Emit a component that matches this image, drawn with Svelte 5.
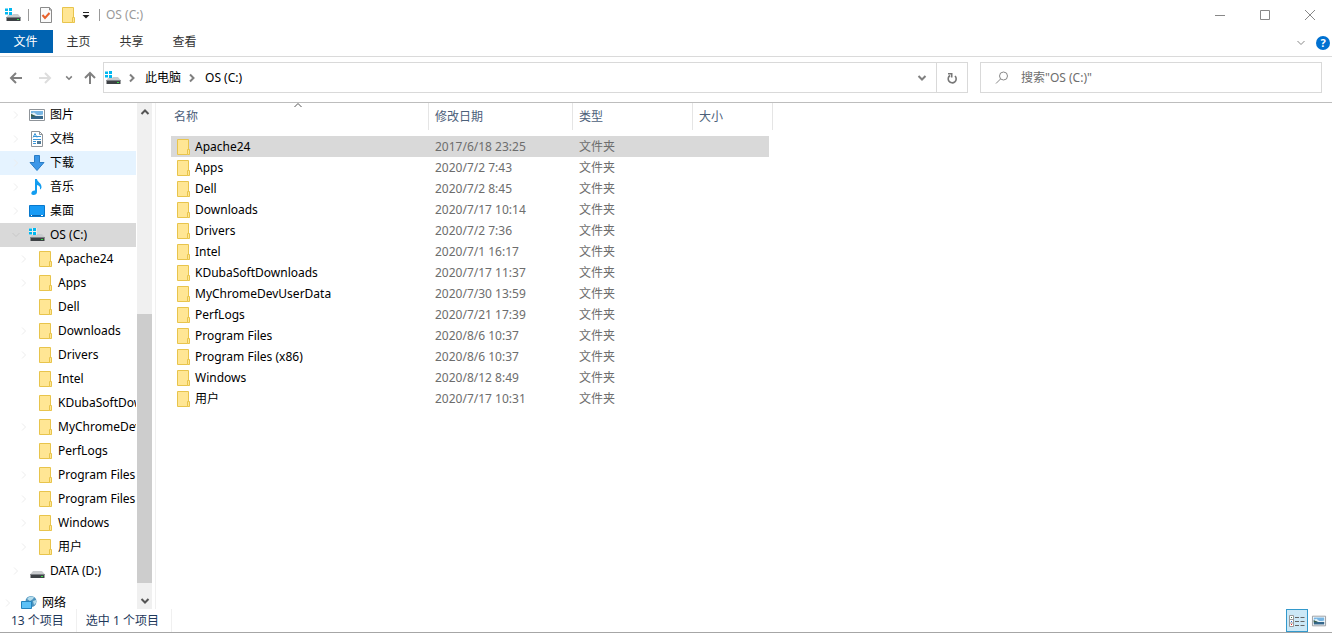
<script lang="ts">
  type Node = { name: string; icon: string; level: number; arrow?: 'open' | 'closed'; state?: string }

  const tree: Node[] = [
    { name: '图片', icon: 'picture', level: 1, arrow: 'closed' },
    { name: '文档', icon: 'document', level: 1, arrow: 'closed' },
    { name: '下载', icon: 'download', level: 1, arrow: 'closed', state: 'hover' },
    { name: '音乐', icon: 'music', level: 1, arrow: 'closed' },
    { name: '桌面', icon: 'desktop', level: 1, arrow: 'closed' },
    { name: 'OS (C:)', icon: 'system', level: 1, arrow: 'open', state: 'selected' },
    { name: 'Apache24', icon: 'folder', level: 2, arrow: 'closed' },
    { name: 'Apps', icon: 'folder', level: 2, arrow: 'closed' },
    { name: 'Dell', icon: 'folder', level: 2 },
    { name: 'Downloads', icon: 'folder', level: 2, arrow: 'closed' },
    { name: 'Drivers', icon: 'folder', level: 2, arrow: 'closed' },
    { name: 'Intel', icon: 'folder', level: 2 },
    { name: 'KDubaSoftDownloads', icon: 'folder', level: 2 },
    { name: 'MyChromeDevUserData', icon: 'folder', level: 2, arrow: 'closed' },
    { name: 'PerfLogs', icon: 'folder', level: 2 },
    { name: 'Program Files', icon: 'folder', level: 2, arrow: 'closed' },
    { name: 'Program Files (x86)', icon: 'folder', level: 2, arrow: 'closed' },
    { name: 'Windows', icon: 'folder', level: 2, arrow: 'closed' },
    { name: '用户', icon: 'folder', level: 2, arrow: 'closed' },
    { name: 'DATA (D:)', icon: 'drive', level: 1, arrow: 'closed' },
    { name: '网络', icon: 'network', level: 0, arrow: 'closed' },
  ]

  const columns = ['名称', '修改日期', '类型', '大小']

  const files = [
    ['Apache24', '2017/6/18 23:25'],
    ['Apps', '2020/7/2 7:43'],
    ['Dell', '2020/7/2 8:45'],
    ['Downloads', '2020/7/17 10:14'],
    ['Drivers', '2020/7/2 7:36'],
    ['Intel', '2020/7/1 16:17'],
    ['KDubaSoftDownloads', '2020/7/17 11:37'],
    ['MyChromeDevUserData', '2020/7/30 13:59'],
    ['PerfLogs', '2020/7/21 17:39'],
    ['Program Files', '2020/8/6 10:37'],
    ['Program Files (x86)', '2020/8/6 10:37'],
    ['Windows', '2020/8/12 8:49'],
    ['用户', '2020/7/17 10:31'],
  ]

  let selected = $state(0)
  let query = $state('')
</script>

{#snippet icon(name: string)}
  <svg class="icon" viewBox="0 0 16 16" aria-hidden="true">
    {#if name === 'folder'}
      <path d="M2.500 0.500h11v10.500h.5v4.500h-11.500z" fill="#ffe694" stroke="#e8c44c" />
      <path d="M12.500 15v-4.500h2v5h-2" fill="#ffe694" stroke="#e8c44c" />
    {:else if name === 'system' || name === 'drive'}
      <g transform={name === 'drive' ? 'translate(0 1)' : undefined}>
        <path d="M4 7h9l2.500 3h-14z" fill="#c9cbce" />
        <path d="M1.500 10h14v4h-14z" fill="#3d4145" />
        <path d="M1.500 10h14v1h-14z" fill="#7d8186" />
        <path d="M12 12h2v1h-2z" fill="#3be04a" />
      </g>
      {#if name === 'system'}
        <path d="M0 1h4v7h-4zM3 1h5v7h-5z" fill="#fff" fill-opacity=".5" />
        <path d="M0 1.500h3v2.500h-3zM4 1h3v3h-3zM0 5h3v2.500h-3zM4 5h3v3h-3z" fill="#00b7f0" />
      {/if}
    {:else if name === 'picture'}
      <path d="M.5 2.500h15v11h-15z" fill="#fff" stroke="#8f9499" />
      <path d="M2 4h12v4h-12z" fill="#77b5e3" />
      <path d="M2 6.500l3-1 4 3 5-1v2h-12z" fill="#e3f0f5" />
      <path d="M2 7l5 2h7v3h-12z" fill="#35678b" />
      <path d="M2 7l5 2.500h-5z" fill="#3c6144" />
    {:else if name === 'document'}
      <path d="M2.500.5h8l3 3v12h-11z" fill="#fff" stroke="#8f9499" />
      <path d="M10.500.5v3h3" fill="none" stroke="#8f9499" />
      <path d="M4 6.500l2-4 2 4M5 5.500h2M8 5.500h4M4 8.500h8M4 10.500h3M4 12.500h3" fill="none" stroke="#3a96d8" />
      <path d="M8 10h4v3h-4z" fill="#4f7995" />
    {:else if name === 'download'}
      <path d="M5.500.5h5v7h4.500l-7 8-7-8h4.500z" fill="#3c97e8" stroke="#2a7dc6" />
    {:else if name === 'music'}
      <path d="M6 0h2c0 3 5 4 4.500 8.500-.3 1-1 2-1.500 2 .5-3-1-4-3-4.500v7c0 2-1.500 3-3.500 3s-2.500-1.300-2-2.500c.5-1.500 2-2.300 3.500-2z" fill="#139df0" />
    {:else if name === 'desktop'}
      <path d="M.5 2.500h15v11h-15z" fill="#179bf5" stroke="#0878cc" />
      <path d="M1 12h14v1h-14z" fill="#0a65ae" />
      <path d="M2 12h1v1h-1zM12 12h2v1h-2z" fill="#fff" />
    {:else if name === 'network'}
      <circle cx="10" cy="6.500" r="5.500" fill="#4c92bd" />
      <path d="M6 4c2-3 4-3 7-2l-1 2-3 2zM12 6l3-1v3l-2 2z" fill="#b5dceb" />
      <path d="M.5 6.500h10v7h-10z" fill="#5cc1f7" stroke="#2583bd" />
    {/if}
  </svg>
{/snippet}

{#snippet chevron(dir: string)}
  <svg class="chevron {dir}" viewBox="0 0 10 10" aria-hidden="true">
    <path d="M1.500 3l3.500 3.500L8.500 3" fill="none" stroke="currentColor" />
  </svg>
{/snippet}

<div class="window">
  <header class="titlebar">
    {@render icon('system')}
    <span class="divider"></span>
    <button class="quick" aria-label="属性">
      <svg class="icon" viewBox="0 0 16 16">
        <path d="M2.500.5h9l2 2.500v12.500h-11z" fill="#fafafa" stroke="#8a8a8a" />
        <path d="M11.500.5v2.500h2" fill="none" stroke="#8a8a8a" />
        <path d="M4.500 8l2.500 3L11.500 6" fill="none" stroke="#e8622c" stroke-width="2" />
      </svg>
    </button>
    <button class="quick" aria-label="新建文件夹">{@render icon('folder')}</button>
    <button class="quick more" aria-label="自定义快速访问工具栏">
      <svg viewBox="0 0 8 8"><path d="M1 1.500h6" stroke="#222" /><path d="M0.500 4h7L4 7.500z" fill="#222" /></svg>
    </button>
    <span class="divider"></span>
    <h1>OS (C:)</h1>
    <div class="controls">
      <button aria-label="最小化"><svg viewBox="0 0 10 10"><path d="M0 5.500h10" /></svg></button>
      <button aria-label="最大化"><svg viewBox="0 0 10 10"><path d="M.5.5h9v9h-9z" /></svg></button>
      <button aria-label="关闭"><svg viewBox="0 0 10 10"><path d="M0 0l10 10M10 0L0 10" /></svg></button>
    </div>
  </header>

  <nav class="ribbon">
    <button class="tab file">文件</button>
    <button class="tab">主页</button>
    <button class="tab">共享</button>
    <button class="tab">查看</button>
    <div class="ribbon-end">
      <button class="plain" aria-label="展开功能区">{@render chevron('down')}</button>
      <button class="help" aria-label="帮助">?</button>
    </div>
  </nav>

  <div class="toolbar">
    <div class="history">
      <button aria-label="后退">
        <svg viewBox="0 0 14 14"><path d="M13 7H2M7 2L2 7l5 5" /></svg>
      </button>
      <button class="off" aria-label="前进">
        <svg viewBox="0 0 14 14"><path d="M1 7h11M7 2l5 5-5 5" /></svg>
      </button>
      <button class="recent" aria-label="最近浏览的位置">{@render chevron('down')}</button>
      <button aria-label="上移">
        <svg viewBox="0 0 14 14"><path d="M7 13V2M2 7l5-5 5 5" /></svg>
      </button>
    </div>
    <div class="address">
      {@render icon('system')}
      {@render chevron('right')}
      <a href="#pc">此电脑</a>
      {@render chevron('right')}
      <a href="#c">OS (C:)</a>
      <button class="drop" aria-label="以前的位置">{@render chevron('down')}</button>
      <button class="refresh" aria-label="刷新">
        <svg viewBox="0 0 12 12">
          <path d="M4 3.500a4 4 0 1 0 5 .5M2 1.800h3.700v3.700" fill="none" stroke="#777" stroke-width="1.600" />
        </svg>
      </button>
    </div>
    <label class="search">
      <svg viewBox="0 0 14 14" aria-hidden="true">
        <circle cx="8.500" cy="5" r="4" /><path d="M5.500 8L1 12.500" />
      </svg>
      <input type="text" aria-label="搜索" placeholder={'搜索"OS (C:)"'} bind:value={query} />
    </label>
  </div>

  <main>
    <div class="sidebar">
      <ul class="tree">
        {#each tree as node}
          <li class="node level-{node.level} {node.state ?? ''}">
            <span class="arrow">
              {#if node.arrow}{@render chevron(node.arrow === 'open' ? 'down' : 'right')}{/if}
            </span>
            {@render icon(node.icon)}
            <span class="label">{node.name}</span>
          </li>
        {/each}
      </ul>
      <div class="scrollbar">
        <button aria-label="向上滚动">{@render chevron('up')}</button>
        <div class="track"><div class="thumb"></div></div>
        <button aria-label="向下滚动">{@render chevron('down')}</button>
      </div>
    </div>

    <div class="content">
      <table>
        <thead>
          <tr>
            {#each columns as column, i}
              <th>
                <div class="head">
                  {column}
                  {#if i === 0}<span class="sort">{@render chevron('up')}</span>{/if}
                </div>
              </th>
            {/each}
          </tr>
        </thead>
        <tbody>
          {#each files as [name, date], i}
            <tr class:selected={selected === i} onclick={() => (selected = i)}>
              <td><div class="name">{@render icon('folder')}{name}</div></td>
              <td>{date}</td>
              <td>文件夹</td>
              <td></td>
            </tr>
          {/each}
        </tbody>
      </table>
    </div>
  </main>

  <footer class="status">
    <span>13 个项目</span>
    <span>选中 1 个项目</span>
    <div class="views">
      <button class="active" aria-label="详细信息">
        <svg viewBox="0 0 16 14">
          <path d="M.5 1.500h4v11h-4zM.5 5.500h4M.5 9h4" fill="#fff" stroke="#999" />
          <path d="M2 3h1v1h-1z" fill="#397a4c" /><path d="M2 7h1v1h-1z" fill="#276fd5" /><path d="M2 10h1v1h-1z" fill="#e22" />
          <path d="M6 3.500h4M11.500 3.500h4M6 7.500h4M11.500 7.500h4M6 11.500h4M11.500 11.500h4" stroke="#666" />
        </svg>
      </button>
      <button aria-label="大缩略图">{@render icon('picture')}</button>
    </div>
  </footer>
</div>

<style>
  :global(body) {
    margin: 0;
    background: #fff;
    overflow: hidden;
  }

  .window {
    display: flex;
    flex-direction: column;
    height: 100vh;
    box-sizing: border-box;
    border-bottom: 1px solid #a6a6a6;
    font: 12px/20px 'Noto Sans', 'Noto Sans CJK SC', sans-serif;
    color: #000;
  }

  button {
    display: flex;
    align-items: center;
    justify-content: center;
    padding: 0;
    border: 0;
    background: none;
    font: inherit;
    color: inherit;
  }

  .icon {
    flex: none;
    width: 16px;
    height: 16px;
  }

  .chevron {
    flex: none;
    width: 10px;
    height: 10px;
  }

  .chevron.right {
    transform: rotate(-90deg);
  }

  .chevron.up {
    transform: rotate(180deg);
  }

  /* title bar */

  .titlebar {
    display: flex;
    align-items: center;
    flex: none;
    height: 30px;
    padding-left: 5px;
  }

  .divider {
    width: 1px;
    height: 12px;
    margin: 0 6px 0 7px;
    background: #999;
  }

  .quick {
    width: 22px;
    height: 22px;
  }

  .quick.more {
    width: 13px;
  }

  .more svg {
    width: 8px;
    height: 8px;
  }

  h1 {
    margin: 0;
    font-size: 12px;
    font-weight: 400;
    color: #999;
  }

  .controls {
    display: flex;
    margin-left: auto;
  }

  .controls button {
    width: 45px;
    height: 30px;
  }

  .controls svg {
    width: 10px;
    height: 10px;
    fill: none;
    stroke: #888;
  }

  /* ribbon tabs */

  .ribbon {
    display: flex;
    flex: none;
    height: 26px;
    border-bottom: 1px solid #dadada;
  }

  .tab {
    width: 53px;
    height: 23px;
    padding: 1px 2px 0 0;
    color: #333;
  }

  .tab.file {
    background: #0063b1;
    color: #fff;
  }

  .ribbon-end {
    display: flex;
    align-items: center;
    gap: 10px;
    margin-left: auto;
    padding-right: 2px;
    color: #888;
  }

  .help {
    width: 14px;
    height: 14px;
    border-radius: 50%;
    background: #0071d1;
    color: #fff;
    font-size: 11px;
    font-weight: 700;
  }

  /* address bar */

  .toolbar {
    display: flex;
    align-items: center;
    flex: none;
    height: 46px;
    padding: 0 10px 4px 0;
    box-sizing: border-box;
    border-bottom: 1px solid #bdbdbd;
  }

  .history {
    display: flex;
    align-items: center;
    flex: none;
    width: 103px;
    padding-left: 9px;
    box-sizing: border-box;
    color: #808080;
  }

  .history button {
    width: 14px;
    height: 24px;
    margin-right: 15px;
  }

  .history button.off {
    margin-right: 12px;
    color: #ddd;
  }

  .history button.recent {
    width: 10px;
    margin-right: 9px;
  }

  .history button:last-child {
    margin-right: 0;
  }

  .history svg:not(.chevron) {
    width: 14px;
    height: 14px;
    fill: none;
    stroke: currentColor;
    stroke-width: 2;
  }

  .recent .chevron {
    width: 8px;
    height: 8px;
    stroke-width: 2;
  }

  .address {
    display: flex;
    align-items: center;
    flex: 1;
    height: 31px;
    padding-left: 1px;
    box-sizing: border-box;
    border: 1px solid #d9d9d9;
    color: #808080;
  }

  .address .chevron {
    margin: 0 8px 0 6px;
    stroke-width: 2;
  }

  .address a {
    color: #000;
    text-decoration: none;
  }

  .address .drop {
    width: 28px;
    height: 29px;
    margin-left: auto;
  }

  .address .drop .chevron {
    margin: 0;
  }

  .refresh {
    width: 31px;
    height: 29px;
    border-left: 1px solid #d9d9d9;
  }

  .refresh svg {
    width: 12px;
    height: 12px;
  }

  .search {
    display: flex;
    align-items: center;
    flex: none;
    gap: 12px;
    width: 26%;
    max-width: 342px;
    height: 31px;
    margin-left: 12px;
    padding: 0 14px;
    box-sizing: border-box;
    border: 1px solid #d9d9d9;
  }

  .search svg {
    flex: none;
    width: 14px;
    height: 14px;
    fill: none;
    stroke: #888;
  }

  .search input {
    flex: 1;
    min-width: 0;
    padding: 0;
    border: 0;
    outline: 0;
    background: none;
    font: inherit;
  }

  .search input::placeholder {
    color: #6d6d6d;
    opacity: 1;
  }

  /* folder tree */

  main {
    display: flex;
    flex: 1;
    min-height: 0;
  }

  .sidebar {
    display: flex;
    flex: none;
    width: 155px;
    border-right: 1px solid #f0f0f0;
  }

  .tree {
    flex: none;
    width: 136px;
    margin: 0;
    padding: 0;
    overflow: hidden;
    list-style: none;
  }

  .node {
    display: flex;
    align-items: center;
    height: 24px;
    white-space: nowrap;
  }

  .node.level-0 {
    margin-top: 8px;
  }

  .node.level-1 {
    padding-left: 8px;
  }

  .node.level-2 {
    padding-left: 16px;
  }

  .node.hover {
    background: #e5f3ff;
  }

  .node.selected {
    background: #d9d9d9;
  }

  .arrow {
    display: flex;
    flex: none;
    width: 18px;
    padding-left: 3px;
    color: #ececec;
  }

  .node.selected .arrow {
    color: #c8c8c8;
  }

  .label {
    margin-left: 5px;
  }

  .scrollbar {
    display: flex;
    flex-direction: column;
    width: 15px;
    margin-left: 1px;
    background: #f0f0f0;
    color: #555;
  }

  .scrollbar button {
    height: 17px;
  }

  .scrollbar .chevron {
    stroke-width: 2;
  }

  .track {
    display: flex;
    flex: 1;
    align-items: flex-end;
    padding-bottom: 9px;
  }

  .thumb {
    width: 100%;
    height: 58%;
    background: #cdcdcd;
  }

  /* file list */

  .content {
    flex: 1;
    padding-left: 15px;
    overflow: hidden;
  }

  table {
    width: 602px;
    table-layout: fixed;
    border-collapse: separate;
    border-spacing: 0;
  }

  th {
    padding: 0 0 6px;
    font-weight: 400;
    text-align: left;
    color: #4c607a;
  }

  th:nth-child(1) {
    width: 258px;
  }

  th:nth-child(2) {
    width: 144px;
  }

  th:nth-child(3) {
    width: 120px;
  }

  .head {
    position: relative;
    height: 27px;
    padding-left: 6px;
    border-right: 1px solid #e5e5e5;
    line-height: 27px;
  }

  th:first-child .head {
    padding-left: 3px;
  }

  .sort {
    position: absolute;
    top: -3px;
    left: 0;
    right: 4px;
    display: flex;
    justify-content: center;
    color: #555;
  }

  td {
    height: 21px;
    padding: 0 0 0 6px;
    line-height: 21px;
    color: #6d6d6d;
  }

  td:last-child {
    border-right: 4px solid transparent;
    background-clip: padding-box;
  }

  .selected td {
    background-color: #d9d9d9;
  }

  .name {
    display: flex;
    align-items: center;
    gap: 4px;
    margin-left: -2px;
    color: #000;
  }

  /* status bar */

  .status {
    display: flex;
    flex: none;
    height: 23px;
    padding-left: 11px;
    line-height: 23px;
    color: #1e395b;
  }

  .status span {
    margin-right: 9px;
    padding-right: 12px;
    border-right: 1px solid #f0f0f0;
  }

  .views {
    display: flex;
    margin-left: auto;
    padding-right: 2px;
  }

  .views button {
    width: 22px;
    height: 23px;
    box-sizing: border-box;
  }

  .views button.active {
    border: 1px solid #3399cc;
    background: #cce8f6;
  }

  .views button svg {
    width: 16px;
    height: 14px;
  }
</style>
